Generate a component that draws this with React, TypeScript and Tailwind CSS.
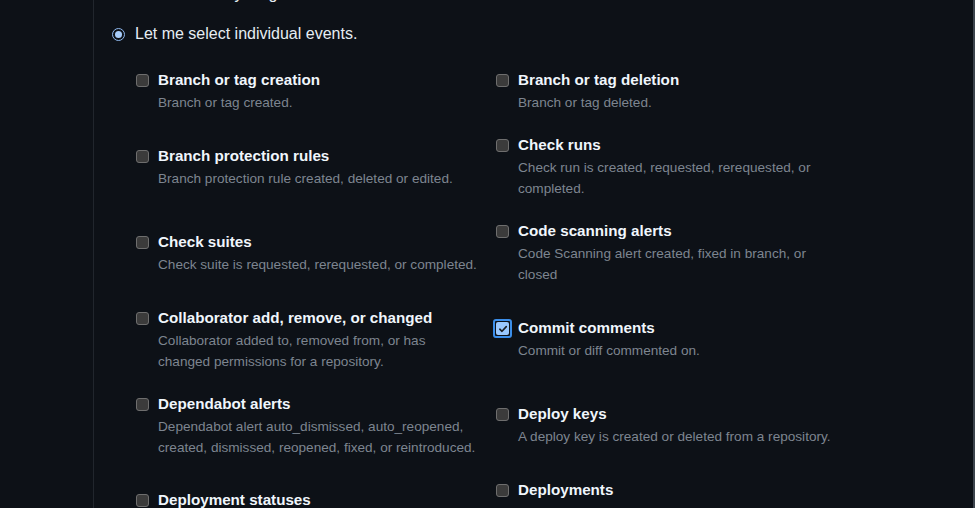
import React from "react";

type HookEvent = {
  title: string;
  lines: string[];
  gap: string;
  checked?: boolean;
};

// left column, top margins copied from the screenshot stagger
const leftEvents: HookEvent[] = [
  { title: "Branch or tag creation", lines: ["Branch or tag created."], gap: "mt-0" },
  { title: "Branch protection rules", lines: ["Branch protection rule created, deleted or edited."], gap: "mt-[31px]" },
  { title: "Check suites", lines: ["Check suite is requested, rerequested, or completed."], gap: "mt-[41px]" },
  {
    title: "Collaborator add, remove, or changed",
    lines: ["Collaborator added to, removed from, or has", "changed permissions for a repository."],
    gap: "mt-[31px]",
  },
  {
    title: "Dependabot alerts",
    lines: ["Dependabot alert auto_dismissed, auto_reopened,", "created, dismissed, reopened, fixed, or reintroduced."],
    gap: "mt-[20px]",
  },
  { title: "Deployment statuses", lines: ["Deployment status updated from the API."], gap: "mt-[30px]" },
];

const rightEvents: HookEvent[] = [
  { title: "Branch or tag deletion", lines: ["Branch or tag deleted."], gap: "mt-0" },
  {
    title: "Check runs",
    lines: ["Check run is created, requested, rerequested, or", "completed."],
    gap: "mt-[20px]",
  },
  {
    title: "Code scanning alerts",
    lines: ["Code Scanning alert created, fixed in branch, or", "closed"],
    gap: "mt-[20px]",
  },
  { title: "Commit comments", lines: ["Commit or diff commented on."], gap: "mt-[31px]", checked: true },
  { title: "Deploy keys", lines: ["A deploy key is created or deleted from a repository."], gap: "mt-[41px]" },
  {
    title: "Deployments",
    lines: ["Repository was deployed or a deployment was deleted."],
    gap: "mt-[31px]",
  },
];

const Checkbox = ({ checked }: { checked?: boolean }) => {
  if (checked) {
    return (
      <span className="mt-[3px] flex h-[19px] w-[19px] shrink-0 -ml-[3px] -mr-[3px] items-center justify-center rounded-[3px] border-2 border-[#3b8eea]">
        <span className="flex h-[13px] w-[13px] items-center justify-center rounded-[2px] bg-[#99c8ff]">
          <svg width="10" height="10" viewBox="0 0 10 10" fill="none">
            <path d="M1.8 5.2 L4 7.3 L8.3 2.6" stroke="#1b1f24" strokeWidth="1.6" strokeLinecap="round" strokeLinejoin="round" />
          </svg>
        </span>
      </span>
    );
  }
  return (
    <span className="mt-[6px] h-[13px] w-[13px] shrink-0 rounded-[3px] border border-[#6e6e6e] bg-[#3b3b3b]" />
  );
};

const EventItem = ({ ev }: { ev: HookEvent }) => (
  <div className={`flex gap-[9px] ${ev.gap}`}>
    <Checkbox checked={ev.checked} />
    <div className="flex flex-col">
      <span className="text-[15.2px] leading-[24px] font-bold text-[#f0f6fc] whitespace-nowrap">{ev.title}</span>
      {ev.lines.map((line) => (
        <span key={line} className="text-[13.6px] leading-[21px] text-[#7d8590] whitespace-nowrap">
          {line}
        </span>
      ))}
    </div>
  </div>
);

const Radio = ({ checked }: { checked?: boolean }) => (
  <span
    className={
      checked
        ? "flex h-[13px] w-[13px] shrink-0 items-center justify-center rounded-full border-[1.5px] border-[#8fb8ee] bg-[#0d1117]"
        : "h-[13px] w-[13px] shrink-0 rounded-full border border-[#6e6e6e] bg-[#3b3b3b]"
    }
  >
    {checked && <span className="h-[7px] w-[7px] rounded-full bg-[#a8cdfb]" />}
  </span>
);

export default function App() {
  return (
    <div
      className="flex h-[508px] w-full overflow-hidden bg-[#0d1117]"
      style={{ fontFamily: '"Liberation Sans", Arial, sans-serif' }}
    >
      <div className="w-[93px] shrink-0" />
      <div className="flex-1 border-l border-[#21262d] pl-[18px]">
        <div className="-mt-[20px] flex flex-col">
          <label className="flex h-[24px] items-center gap-[10px] text-[16px] text-[#e6edf3]">
            <Radio />
            <span className="translate-y-[2px]">Send me everything.</span>
          </label>
          <label className="mt-[18px] flex h-[24px] items-center gap-[10px] text-[16px] text-[#e6edf3]">
            <Radio checked />
            <span>Let me select individual events.</span>
          </label>

          <div className="mt-[22px] ml-[24px] flex">
            <div className="flex w-[360px] flex-col">
              {leftEvents.map((ev) => (
                <EventItem key={ev.title} ev={ev} />
              ))}
            </div>
            <div className="flex w-[360px] flex-col">
              {rightEvents.map((ev) => (
                <EventItem key={ev.title} ev={ev} />
              ))}
            </div>
          </div>
        </div>
      </div>
      <div className="w-[2px] shrink-0 bg-[#3d444d]" />
    </div>
  );
}
